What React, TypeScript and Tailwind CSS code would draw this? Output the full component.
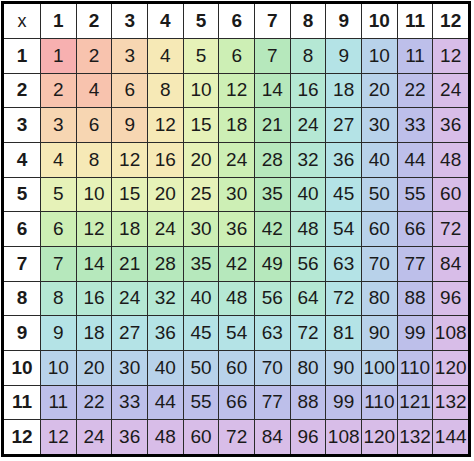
import React from 'react';

const bands = [
  'bg-[#f7b0b0]',
  'bg-[#f8c3ae]',
  'bg-[#f7d6b2]',
  'bg-[#f6e9b6]',
  'bg-[#e6f2b8]',
  'bg-[#cdefb5]',
  'bg-[#b6e8bc]',
  'bg-[#b5e8d4]',
  'bg-[#b4e3e6]',
  'bg-[#b8d2ea]',
  'bg-[#bdbfea]',
  'bg-[#d8bde8]',
];

const nums = Array.from({ length: 12 }, (_, i) => i + 1);

export default function App() {
  return (
    <div className="w-[474px] h-[461px] bg-white pl-px pt-px font-['Liberation_Sans',Arial,sans-serif] text-[#1a1a1a]">
      <div className="w-[470px] h-[456px] border-[3px] border-black bg-[#2a2a2a]">
        <div className="grid h-full grid-cols-[36px_repeat(12,1fr)] grid-rows-[34px_repeat(12,1fr)] gap-px">
          <div className="flex items-center justify-center bg-white text-[18px]">x</div>
          {nums.map((n) => (
            <div key={'h' + n} className="flex items-center justify-center bg-white text-[19px] font-bold">
              {n}
            </div>
          ))}
          {nums.map((r) => (
            <React.Fragment key={'r' + r}>
              <div className="flex items-center justify-center bg-white text-[19px] font-bold">{r}</div>
              {nums.map((c) => (
                <div
                  key={r + '-' + c}
                  className={`flex items-center justify-center text-[19px] ${bands[Math.max(r, c) - 1]}`}
                >
                  {r * c}
                </div>
              ))}
            </React.Fragment>
          ))}
        </div>
      </div>
    </div>
  );
}
